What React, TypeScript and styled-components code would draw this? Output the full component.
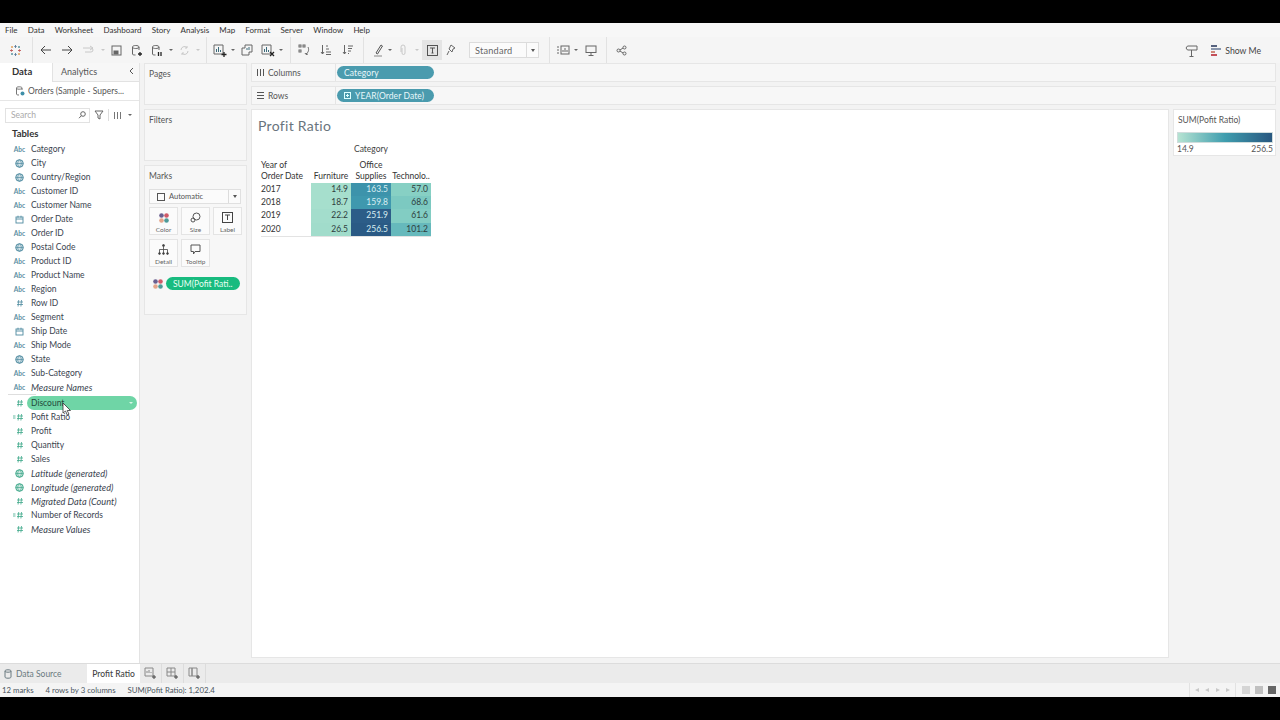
import React from "react";
import styled, { createGlobalStyle } from "styled-components";

const Global = createGlobalStyle`
  html, body { margin: 0; padding: 0; background: #000; }
  body { font-family: Lato, "Open Sans", sans-serif; overflow: hidden; }
  * { box-sizing: border-box; }
`;

const Page = styled.div`
  position: relative; width: 1280px; height: 720px; background: #000;
  display: flex; flex-direction: column; overflow: hidden; color: #3c3c3c;
`;
const BlackBar = styled.div<{ $h: number }>` height: ${p => p.$h}px; flex: none; background: #000; `;
const MenuBar = styled.nav`
  height: 14px; flex: none; background: #f7f7f7; display: flex; align-items: center;
  padding-left: 5px; gap: 10.2px; font-size: 8px; color: #333;
`;
const MenuItem = styled.span``;
const Toolbar = styled.div`
  height: 26px; flex: none; background: #f5f5f5; display: flex; align-items: center;
`;
const Slot = styled.div<{ $w: number; $on?: boolean }>`
  width: ${p => p.$w}px; height: 20px; flex: none; display: flex; align-items: center; justify-content: center;
  background: ${p => (p.$on ? "#e4e4e4" : "transparent")};
  & > svg { flex: none; }
`;
const Sep = styled.div<{ $w: number }>`
  width: ${p => p.$w}px; height: 26px; flex: none; display: flex; justify-content: center;
  &::after { content: ""; width: 1px; height: 100%; background: #e2e2e2; }
`;
const Caret = styled.span<{ $w?: number; $c?: string }>`
  flex: none; width: ${p => p.$w ?? 4}px; display: flex; justify-content: center;
  &::after { content: ""; flex: none; border-left: 2px solid transparent; border-right: 2px solid transparent;
    border-top: 2.5px solid ${p => p.$c ?? "#666"}; }
`;
const StandardBox = styled.div`
  width: 70px; height: 16px; margin-left: 9px; flex: none; background: #fbfbfb; border: 1px solid #dcdcdc;
  display: flex; align-items: center; font-size: 9.2px; letter-spacing: .2px; color: #666; padding-left: 5px; position: relative;
`;
const StandardText = styled.span` flex: 1; `;
const StandardCaret = styled.span`
  width: 12px; height: 100%; border-left: 1px solid #dcdcdc; display: flex; align-items: center; justify-content: center;
  &::after { content: ""; border-left: 2.5px solid transparent; border-right: 2.5px solid transparent; border-top: 3px solid #555; }
`;
const ToolRight = styled.div` margin-left: auto; display: flex; align-items: center; padding-right: 19px; `;
const ShowMe = styled.div` display: flex; align-items: center; gap: 4px; margin-left: 13px; font-size: 8.7px; color: #444; `;

const Body = styled.div` flex: 1; min-height: 0; background: #f3f3f3; display: flex; `;
const Side = styled.aside`
  width: 140px; flex: none; background: #fff; border-right: 1px solid #e3e3e3; display: flex; flex-direction: column;
`;
const SideTabs = styled.div` height: 19px; flex: none; display: flex; font-size: 9px; `;
const DataTab = styled.div`
  width: 52px; padding: 3px 0 0 12px; font-weight: 700; color: #333; font-size: 9.5px;
`;
const AnalyticsTab = styled.div`
  flex: 1; display: flex; justify-content: space-between; padding: 3px 3px 0 8px; background: #f7f7f7;
  border-left: 1px solid #e2e2e2; border-bottom: 1px solid #e2e2e2; color: #555;
`;
const SourceRow = styled.div`
  height: 19px; flex: none; display: flex; align-items: center; padding-left: 15px; gap: 3px; font-size: 8.5px; color: #555;
  border-bottom: 1px solid #e6e6e6;
`;
const SearchRow = styled.div` flex: none; display: flex; align-items: center; padding: 5px 0 0 5px; height: 23px; `;
const SearchBox = styled.div`
  width: 85px; height: 15px; border: 1px solid #e2e2e2; display: flex; align-items: center; justify-content: space-between;
  padding: 0 3px 0 5px; font-size: 8.5px; color: #aaa;
`;
const SearchTools = styled.div` display: flex; align-items: center; margin-left: 4px; gap: 4px; `;
const VLine = styled.div` width: 1px; height: 12px; background: #ddd; `;
const TablesHead = styled.div` flex: none; height: 18px; padding: 4px 0 0 12px; font-weight: 700; font-size: 9.5px; color: #333; `;
const FieldList = styled.div` display: flex; flex-direction: column; `;
const FieldRow = styled.div`
  height: 14px; display: flex; align-items: center; position: relative; flex: none;
`;
const IconCol = styled.div` width: 31px; flex: none; display: flex; justify-content: center; padding-left: 8px; `;
const FieldName = styled.span<{ $it?: boolean }>`
  font-size: ${p => (p.$it ? "9.2px" : "8.5px")}; color: #3b4450; font-style: ${p => (p.$it ? "italic" : "normal")}; white-space: nowrap;
`;
const AbcGlyph = styled.span`
  font-size: 6.5px; font-weight: 700; color: #5a8ea2; font-family: Lato, sans-serif; width: 14px; text-align: center; white-space: nowrap;
`;
const Divider = styled.div` height: 1px; width: 28px; margin: 0 0 1px 8px; background: #dedede; flex: none; `;
const DragPill = styled.div`
  position: absolute; left: 27px; top: 0; width: 110px; height: 14px; background: #6fd5a6; border-radius: 7px;
  display: flex; align-items: center; justify-content: space-between; padding: 0 4px 0 4px;
  font-size: 8.5px; color: #1f4a3a;
`;
const Cursor = styled.svg` position: absolute; left: 62px; top: 402px; `;

const CardCol = styled.div` width: 103px; flex: none; margin: 0 4px; display: flex; flex-direction: column; gap: 4px; `;
const Card = styled.section<{ $h: number }>`
  height: ${p => p.$h}px; flex: none; border: 1px solid #e6e6e6; background: #f7f7f7;
  padding: 5px 4px; font-size: 8.5px; color: #555; position: relative;
`;
const MarkSelect = styled.div`
  margin-top: 8px; height: 15px; width: 92px; background: #fbfbfb; border: 1px solid #e0e0e0; display: flex; align-items: center;
  font-size: 7.5px; padding-left: 7px; gap: 4px; color: #555;
`;
const CheckBox = styled.span` width: 8px; height: 8px; border: 1px solid #555; flex: none; `;
const SelectLabel = styled.span` flex: 1; `;
const MarkGrid = styled.div` display: grid; grid-template-columns: repeat(3, 29px); gap: 4px 3px; margin-top: 3px; `;
const MarkBtn = styled.div`
  height: 28px; background: #fbfbfb; border: 1px solid #e4e4e4; display: flex; flex-direction: column; align-items: center;
  justify-content: flex-end; gap: 3px; padding-bottom: 1px; font-size: 6.5px; color: #666;
`;
const MarkShelf = styled.div` display: flex; align-items: center; margin-top: 10px; gap: 3px; padding-left: 4px; `;
const MeasurePill = styled.div`
  width: 74px; height: 13px; background: #18bb7f; color: #eafff4; border-radius: 7px; font-size: 8.5px;
  display: flex; align-items: center; padding-left: 7px; white-space: nowrap;
`;

const MainCol = styled.div` flex: 1; min-width: 0; padding: 0 4px 5px 0; display: flex; flex-direction: column; `;
const Shelf = styled.div`
  height: 19px; flex: none; margin-bottom: 4px; border: 1px solid #e6e6e6; background: #f7f7f7; display: flex; align-items: center;
  font-size: 8.5px; color: #555;
`;
const ShelfLabel = styled.div`
  width: 84px; height: 100%; border-right: 1px solid #e4e4e4; display: flex; align-items: center; gap: 3px; padding-left: 4px;
`;
const DimPill = styled.div`
  margin-left: 1px; width: 97px; height: 13px; background: #4a9bae; border-radius: 7px; font-size: 8.5px;
  color: #e8f7fa; display: flex; align-items: center; padding-left: 7px; gap: 4px; letter-spacing: .1px;
`;
const Workspace = styled.div` flex: 1; display: flex; gap: 4px; min-height: 0; `;
const Canvas = styled.div`
  width: 918px; flex: none; background: #fff; border: 1px solid #e6e6e6; padding: 8px 0 0 6px;
`;
const Title = styled.h1` margin: 0; font-size: 14px; font-weight: 400; color: #69747d; letter-spacing: .3px; height: 25.5px; line-height: 15px; `;
const Table = styled.div`
  display: grid; grid-template-columns: 50px 40px 40px 40px; grid-template-rows: 13.4px 13px 12.8px repeat(4, 13.4px);
  margin: 0 0 0 3px; font-size: 8.5px; color: #333; width: 170px; border-bottom: 1px solid #e3e3e3;
`;
const HeadTitle = styled.div` grid-column: 2 / 5; grid-row: 1; text-align: center; color: #444; `;
const HeadYear = styled.div` grid-column: 1; grid-row: 2 / 4; align-self: end; line-height: 11px; padding-bottom: 1px; `;
const HeadCol = styled.div<{ $c: number }>`
  grid-column: ${p => p.$c}; grid-row: 2 / 4; align-self: end; text-align: center; line-height: 11px; padding-bottom: 1px; white-space: nowrap; overflow: hidden;
`;
const RowHead = styled.div<{ $r: number }>` grid-column: 1; grid-row: ${p => p.$r}; line-height: 13.4px; `;
const Cell = styled.div<{ $bg: string; $light?: boolean; $r: number; $c: number }>`
  grid-column: ${p => p.$c}; grid-row: ${p => p.$r};
  background: ${p => p.$bg}; color: ${p => (p.$light ? "#d7eef2" : "#2f3d3d")}; text-align: right; padding-right: 3px; line-height: 13.4px;
`;
const Legend = styled.aside`
  flex: 1; height: 47px; background: #fff; border: 1px solid #e6e6e6; padding: 5px 2px 0 3px; font-size: 8.5px; color: #555;
`;
const LegendTitle = styled.div` height: 17px; padding-left: 1px; `;
const Ramp = styled.div` height: 11px; background: linear-gradient(90deg, #b5e3d2, #3f9dae 50%, #285780); border: 1px solid #cfdcdc; `;
const LegendScale = styled.div` display: flex; justify-content: space-between; margin-top: 1px; `;

const TabBar = styled.div` height: 20px; flex: none; background: #ebebeb; border-top: 1px solid #dcdcdc; display: flex; align-items: stretch; `;
const SourceTab = styled.div`
  width: 87px; display: flex; align-items: center; padding-left: 4px; gap: 4px; font-size: 8.5px; color: #6a7a80;
`;
const SheetTab = styled.div` width: 53px; background: #fff; display: flex; align-items: center; justify-content: center; font-size: 8.5px; font-weight: 500; color: #444; `;
const AddTab = styled.div` width: 22px; border-right: 1px solid #dcdcdc; display: flex; align-items: center; justify-content: center; `;
const StatusBar = styled.footer`
  height: 14px; flex: none; background: #f4f4f4; display: flex; align-items: center; padding-left: 2px; font-size: 7.8px; color: #4a5560;
`;
const StatusText = styled.span<{ $ml?: number }>` margin-left: ${p => p.$ml ?? 0}px; `;
const Pager = styled.div` margin-left: auto; display: flex; align-items: center; height: 100%; `;
const PagerNav = styled.div` width: 47px; height: 100%; border-left: 1px solid #e2e2e2; border-right: 1px solid #e2e2e2; display: flex; align-items: center; justify-content: space-around; padding: 0 2px; `;
const PagerTri = styled.span<{ $left?: boolean }>`
  width: 0; height: 0; border-top: 2.5px solid transparent; border-bottom: 2.5px solid transparent;
  ${p => (p.$left ? "border-right: 4px solid #c9c9c9;" : "border-left: 4px solid #c9c9c9;")}
`;
const ViewIcons = styled.div` display: flex; align-items: center; gap: 5px; padding: 0 4px 0 6px; `;
const ViewBox = styled.span<{ $c: string }>` width: 8px; height: 8px; background: ${p => p.$c}; flex: none; `;

const Ico = ({ w = 14, h = 14, children, c = "#555", sw = 1 }: { w?: number; h?: number; children: React.ReactNode; c?: string; sw?: number }) => (
  <svg width={w} height={h} viewBox={`0 0 ${w} ${h}`} fill="none" stroke={c} strokeWidth={sw}>{children}</svg>
);

const Logo = () => (
  <svg width="13" height="13" viewBox="0 0 13 13" fill="none" strokeWidth=".9">
    <path d="M6.500 1v3M5.300 2.500h2.400M6.500 9v3M5.300 10.500h2.400" stroke="#5a7a9a" />
    <path d="M1 6.500h3M2.500 5.300v2.400M9 6.500h3M10.500 5.300v2.400" stroke="#c05a5a" />
    <path d="M3 2v2M2 3h2M10 9v2M9 10h2" stroke="#e09a50" />
    <path d="M10 2v2M9 3h2M3 9v2M2 10h2" stroke="#4f8f9a" />
  </svg>
);
const ArrowL = ({ c = "#444" }: { c?: string }) => <Ico w={12} h={10} c={c}><path d="M11 5H1M5 1L1 5l4 4" /></Ico>;
const ArrowR = ({ c = "#444" }: { c?: string }) => <Ico w={12} h={10} c={c}><path d="M1 5h10M7 1l4 4-4 4" /></Ico>;
const Redo = () => <Ico w={12} h={10} c="#c8c8c8"><path d="M1 3h8a2 2 0 010 4H3M8 1l3 2-3 2" /></Ico>;
const Save = () => <Ico w={11} h={11} c="#666"><rect x="1" y="1" width="9" height="9" /><rect x="3" y="6" width="4" height="3" fill="#666" /></Ico>;
const Db = ({ badge }: { badge: "plus" | "pause" }) => (
  <Ico w={12} h={13} c="#666">
    <path d="M1.500 3v7c0 .8 1 1 3 1M8 3v3M1.500 3c0-1 1.500-1.500 3.200-1.500S8 2 8 3 6.400 4.500 4.700 4.500 1.500 4 1.500 3z" />
    {badge === "plus" ? <path d="M9 8v4M7 10h4" stroke="#222" strokeWidth="1.300" /> : <path d="M7.500 8v4M10 8v4" stroke="#222" strokeWidth="1.300" />}
  </Ico>
);
const Refresh = () => <Ico w={11} h={11} c="#c8c8c8"><path d="M2 5a3.500 3.500 0 016-2.400M9 6a3.500 3.500 0 01-6 2.400" /><path d="M8 1v2H6M3 10V8h2" /></Ico>;
const BarAdd = ({ x }: { x?: boolean }) => (
  <Ico w={14} h={13} c="#666">
    <path d="M1 1h9v9H1z" /><path d="M3.500 8V5M5.500 8V3M7.500 8V6" stroke="#3a6a7a" />
    {x ? <path d="M9 8l4 4M13 8l-4 4" stroke="#222" strokeWidth="1.300" /> : <path d="M11 8v5M8.500 10.500h5" stroke="#222" strokeWidth="1.300" />}
  </Ico>
);
const Dup = () => <Ico w={12} h={12} c="#666"><path d="M4 1h7v7H8v3H1V4h3z" /><path d="M6 6V4M8 6V3" stroke="#3a6a7a" /></Ico>;
const Swap = () => <Ico w={12} h={12} c="#666"><rect x="1" y="1" width="2" height="2" /><rect x="5" y="1" width="2" height="2" /><rect x="1" y="6" width="2" height="2" /><path d="M10 3c1 2 1 5-2 7M7 9l1 1.500L10 10" /></Ico>;
const SortAsc = () => <Ico w={12} h={12} c="#666"><path d="M2.500 1v9M1 8l1.500 2L4 8" /><path d="M6 2h2M6 5h3M6 8h5M6 10.500h5" /></Ico>;
const SortDesc = () => <Ico w={12} h={12} c="#666"><path d="M2.500 1v9M1 8l1.500 2L4 8" /><path d="M6 2h5M6 4.500h4M6 7h3M6 9.500h1" /></Ico>;
const Pen = () => <Ico w={10} h={13} c="#555"><path d="M2 9L7 1l1.500 1L3.500 10z" /><path d="M0 12h8" stroke="#888" /></Ico>;
const Clip = () => <Ico w={10} h={12} c="#c8c8c8"><path d="M3 8V3a2 2 0 014 0v6a1.500 1.500 0 01-3 0V4" /></Ico>;
const TBox = () => <Ico w={11} h={11} c="#444" sw={.9}><rect x=".5" y=".5" width="10" height="10" /><path d="M3 3h5M5.500 3v5M4.500 8h2" /></Ico>;
const Pin = () => <Ico w={10} h={12} c="#666"><path d="M5 1l4 3-2 1-1 3-3-3 1-2zM3 7l-2 4" /></Ico>;
const Fit = () => <Ico w={14} h={10} c="#666"><rect x="5" y="1" width="8" height="8" /><path d="M7 7V5M9 7V3M11 7V5" /><path d="M1 2h2M1 5h2M1 8h2" /></Ico>;
const Monitor = () => <Ico w={12} h={11} c="#666"><rect x="1" y="1" width="10" height="6.500" /><path d="M6 7.500V10M3.500 10.500h5" /></Ico>;
const Share = () => <Ico w={11} h={11} c="#666"><circle cx="2.500" cy="5.500" r="1.500" /><circle cx="8.500" cy="2.500" r="1.500" /><circle cx="8.500" cy="8.500" r="1.500" /><path d="M4 5l3-2M4 6l3 2" /></Ico>;
const Signpost = () => <Ico w={13} h={13} c="#666"><path d="M1 4l1.500-2H12v4H2.500z" /><path d="M6.500 6v6M4.500 12.500h4" /></Ico>;
const ShowMeIcon = () => (
  <svg width="10" height="11" viewBox="0 0 10 11"><rect y="0" width="6" height="2" fill="#56627e" /><rect y="3" width="10" height="2" fill="#8a97ad" /><rect y="6" width="4" height="2" fill="#d08a7a" /><rect y="9" width="6" height="2" fill="#c4505a" /></svg>
);

const Globe = ({ c = "#4f8ba0" }: { c?: string }) => (
  <Ico w={9} h={9} c={c}><circle cx="4.500" cy="4.500" r="3.800" fill={c} fillOpacity=".25" /><path d="M.8 4.500h7.400M4.500.7c-2.400 2.400-2.400 5.200 0 7.600M4.500.7c2.400 2.400 2.400 5.200 0 7.600" strokeWidth=".7" /></Ico>
);
const Cal = ({ c = "#4f8ba0" }: { c?: string }) => (
  <Ico w={9} h={9} c={c} sw={.9}><rect x="1" y="2" width="7" height="6" /><path d="M1 4h7M3 .7v2M6 .7v2" /></Ico>
);
const Hash = ({ c = "#4f9c8a", eq }: { c?: string; eq?: boolean }) => (
  <svg width="14" height="8" viewBox="0 0 14 8" fill="none" stroke={c} strokeWidth=".8">
    <path d="M4 3h6M4 5.500h6M5.700 1l-.6 6.500M8.500 1l-.6 6.500" />
    {eq ? <path d="M0 3h2.500M0 5h2.500" /> : null}
  </svg>
);

const tool = (w: number, node?: React.ReactNode, on?: boolean) => <Slot $w={w} $on={on}>{node}</Slot>;

const MENUS = ["File", "Data", "Worksheet", "Dashboard", "Story", "Analysis", "Map", "Format", "Server", "Window", "Help"];

type F = { n: string; t: "abc" | "globe" | "cal" | "hash" | "hashEq" | "gGlobe"; it?: boolean };
const DIMS: F[] = [
  { n: "Category", t: "abc" }, { n: "City", t: "globe" }, { n: "Country/Region", t: "globe" }, { n: "Customer ID", t: "abc" },
  { n: "Customer Name", t: "abc" }, { n: "Order Date", t: "cal" }, { n: "Order ID", t: "abc" }, { n: "Postal Code", t: "globe" },
  { n: "Product ID", t: "abc" }, { n: "Product Name", t: "abc" }, { n: "Region", t: "abc" }, { n: "Row ID", t: "hash" },
  { n: "Segment", t: "abc" }, { n: "Ship Date", t: "cal" }, { n: "Ship Mode", t: "abc" }, { n: "State", t: "globe" },
  { n: "Sub-Category", t: "abc" }, { n: "Measure Names", t: "abc", it: true },
];
const MEAS: F[] = [
  { n: "Pofit Ratio", t: "hashEq" }, { n: "Profit", t: "hash" }, { n: "Quantity", t: "hash" }, { n: "Sales", t: "hash" },
  { n: "Latitude (generated)", t: "gGlobe", it: true }, { n: "Longitude (generated)", t: "gGlobe", it: true },
  { n: "Migrated Data (Count)", t: "hash", it: true }, { n: "Number of Records", t: "hashEq" }, { n: "Measure Values", t: "hash", it: true },
];
const fieldIcon = (t: F["t"], dim: boolean) => {
  const green = "#3fa88a";
  if (t === "abc") return <AbcGlyph>Abc</AbcGlyph>;
  if (t === "globe") return <Globe />;
  if (t === "gGlobe") return <Globe c={green} />;
  if (t === "cal") return <Cal />;
  if (t === "hashEq") return <Hash c={green} eq />;
  return <Hash c={dim ? "#4f8ba0" : green} />;
};
const Field = ({ f, dim }: { f: F; dim: boolean }) => (
  <FieldRow><IconCol>{fieldIcon(f.t, dim)}</IconCol><FieldName $it={f.it}>{f.n}</FieldName></FieldRow>
);

const ROWS: [string, [string, string, boolean][]][] = [
  ["2017", [["14.9", "#a6dfcd", false], ["163.5", "#3d93ab", true], ["57.0", "#87d0c4", false]]],
  ["2018", [["18.7", "#a6dfcd", false], ["159.8", "#3f98ae", true], ["68.6", "#7cc9c1", false]]],
  ["2019", [["22.2", "#a3ddcc", false], ["251.9", "#2c5d88", true], ["61.6", "#82cdc3", false]]],
  ["2020", [["26.5", "#a1dccb", false], ["256.5", "#2a5a85", true], ["101.2", "#66b9bc", false]]],
];

const ColorDots = () => (
  <svg width="10" height="10" viewBox="0 0 10 10">
    <circle cx="2.500" cy="2.500" r="2.300" fill="#6a5f8f" /><circle cx="7.500" cy="2.500" r="2.300" fill="#cf5a68" />
    <circle cx="2.500" cy="7.500" r="2.300" fill="#e5a58a" /><circle cx="7.500" cy="7.500" r="2.300" fill="#4f9a98" />
  </svg>
);
const MarkIcon = ({ k }: { k: string }) => {
  if (k === "Color") return <ColorDots />;
  if (k === "Size") return <Ico w={11} h={11}><circle cx="6.500" cy="4.500" r="3.500" /><circle cx="3" cy="8" r="2" /></Ico>;
  if (k === "Label") return <Ico w={11} h={11} c="#444"><rect x=".5" y=".5" width="10" height="10" /><path d="M3 3h5M5.500 3v5" /></Ico>;
  if (k === "Detail") return <Ico w={11} h={11} c="#444" sw={.8}><circle cx="5.500" cy="1.500" r="1" fill="#444" /><path d="M5.500 2.500v3M1.500 9V5.500h8V9M5.500 5.500V9" /><circle cx="1.500" cy="9.500" r=".9" fill="#444" /><circle cx="5.500" cy="9.500" r=".9" fill="#444" /><circle cx="9.500" cy="9.500" r=".9" fill="#444" /></Ico>;
  return <Ico w={11} h={11}><path d="M1 1h9v6.500H5L3.500 10V7.500H1z" /></Ico>;
};

export default function App() {
  return (
    <Page>
      <Global />
      <BlackBar $h={23} />
      <MenuBar>{MENUS.map(m => <MenuItem key={m}>{m}</MenuItem>)}</MenuBar>
      <Toolbar>
        {tool(30, <Logo />)}<Sep $w={4} />
        {tool(24, <ArrowL />)}{tool(18, <ArrowR />)}{tool(24, <Redo />)}<Caret $c="#c8c8c8" $w={6} />
        {tool(20, <Save />)}{tool(22, <Db badge="plus" />)}{tool(18, <Db badge="pause" />)}{tool(10, <Caret />)}
        {tool(16, <Refresh />)}{tool(12, <Caret $c="#c8c8c8" />)}<Sep $w={4} />
        {tool(23, <BarAdd />)}<Caret />{tool(24, <Dup />)}{tool(18, <BarAdd x />)}{tool(8, <Caret />)}<Sep $w={10} />
        {tool(18, <Swap />)}{tool(26, <SortAsc />)}{tool(18, <SortDesc />)}<Sep $w={12} />
        {tool(20, <Pen />)}<Caret $w={2} />{tool(24, <Clip />)}<Caret $c="#c8c8c8" />{tool(3)}
        {tool(20, <TBox />, true)}{tool(18, <Pin />)}
        <StandardBox><StandardText>Standard</StandardText><StandardCaret /></StandardBox>
        <Sep $w={20} />
        {tool(8, <Fit />)}<Caret $w={18} />{tool(12, <Monitor />)}<Sep $w={18} />{tool(12, <Share />)}
        <ToolRight><Signpost /><ShowMe><ShowMeIcon /><span>Show Me</span></ShowMe></ToolRight>
      </Toolbar>
      <Body>
        <Side>
          <SideTabs>
            <DataTab>Data</DataTab>
            <AnalyticsTab><span>Analytics</span><Ico w={8} h={10} c="#555"><path d="M5 2L2 5l3 3" /></Ico></AnalyticsTab>
          </SideTabs>
          <SourceRow>
            <Ico w={10} h={10} c="#777"><path d="M1.500 2v6c0 .8 1 1 2.500 1M7 2v2M1.500 2c0-.8 1-1.200 2.700-1.200S7 1.200 7 2 5.900 3.200 4.200 3.200 1.500 2.800 1.500 2z" /><circle cx="7.500" cy="7.500" r="2" fill="#3f8fa8" stroke="none" /></Ico>
            <span>Orders (Sample - Supers...</span>
          </SourceRow>
          <SearchRow>
            <SearchBox>Search<Ico w={8} h={8} c="#666"><circle cx="5" cy="3" r="2.300" /><path d="M3.400 4.700L1 7.200" /></Ico></SearchBox>
            <SearchTools>
              <Ico w={10} h={10} c="#666"><path d="M1 1h8L6 5v4L4 8V5z" /></Ico>
              <VLine />
              <Ico w={9} h={9} c="#777"><path d="M1.500 1v7M4.500 1v7M7.500 1v7" /></Ico>
              <Caret $w={8} />
            </SearchTools>
          </SearchRow>
          <TablesHead>Tables</TablesHead>
          <FieldList>
            {DIMS.map(f => <Field key={f.n} f={f} dim />)}
            <Divider />
            <FieldRow>
              <IconCol><Hash c="#3fa88a" /></IconCol>
              <FieldName>Discount</FieldName>
              <DragPill><span>Discount</span><Caret $c="#d8f5e6" /></DragPill>
            </FieldRow>
            {MEAS.map(f => <Field key={f.n} f={f} dim={false} />)}
          </FieldList>
        </Side>
        <CardCol>
          <Card $h={42}>Pages</Card>
          <Card $h={52}>Filters</Card>
          <Card $h={150}>
            Marks
            <MarkSelect><CheckBox /><SelectLabel>Automatic</SelectLabel><StandardCaret /></MarkSelect>
            <MarkGrid>
              {["Color", "Size", "Label", "Detail", "Tooltip"].map(k => <MarkBtn key={k}><MarkIcon k={k} />{k}</MarkBtn>)}
            </MarkGrid>
            <MarkShelf><ColorDots /><MeasurePill>SUM(Pofit Rati..</MeasurePill></MarkShelf>
          </Card>
        </CardCol>
        <MainCol>
          <Shelf>
            <ShelfLabel><Ico w={9} h={9} c="#555"><path d="M1.500 1v7M4.500 1v7M7.500 1v7" /></Ico>Columns</ShelfLabel>
            <DimPill>Category</DimPill>
          </Shelf>
          <Shelf>
            <ShelfLabel><Ico w={9} h={9} c="#555"><path d="M1 1.500h7M1 4.500h7M1 7.500h7" /></Ico>Rows</ShelfLabel>
            <DimPill><Ico w={7} h={7} c="#dff"><rect x=".5" y=".5" width="6" height="6" /><path d="M2 3.500h3M3.500 2v3" /></Ico>YEAR(Order Date)</DimPill>
          </Shelf>
          <Workspace>
            <Canvas>
              <Title>Profit Ratio</Title>
              <Table>
                <HeadTitle>Category</HeadTitle>
                <HeadYear>Year of<br />Order Date</HeadYear>
                <HeadCol $c={2}>Furniture</HeadCol>
                <HeadCol $c={3}>Office<br />Supplies</HeadCol>
                <HeadCol $c={4}>Technolo..</HeadCol>
                {ROWS.map(([y, cells], i) => (
                  <React.Fragment key={y}>
                    <RowHead $r={i + 4}>{y}</RowHead>
                    {cells.map(([v, bg, light], j) => <Cell key={v} $r={i + 4} $c={j + 2} $bg={bg} $light={light}>{v}</Cell>)}
                  </React.Fragment>
                ))}
              </Table>
            </Canvas>
            <Legend>
              <LegendTitle>SUM(Pofit Ratio)</LegendTitle>
              <Ramp />
              <LegendScale><span>14.9</span><span>256.5</span></LegendScale>
            </Legend>
          </Workspace>
        </MainCol>
      </Body>
      <TabBar>
        <SourceTab><Ico w={8} h={10} c="#6a7a80"><path d="M1 2v6c0 .8 1.200 1.200 3 1.200S7 8.800 7 8V2M1 2c0-.8 1.200-1.200 3-1.200S7 1.200 7 2 5.800 3.200 4 3.200 1 2.800 1 2z" /></Ico>Data Source</SourceTab>
        <SheetTab>Profit Ratio</SheetTab>
        <AddTab><Ico w={13} h={13} c="#888"><path d="M1 1h8v8H1z" /><path d="M3 6V4M5 6V3M7 6V5" /><path d="M10 8v4M8 10h4" stroke="#444" /></Ico></AddTab>
        <AddTab><Ico w={13} h={13} c="#888"><path d="M1 1h8v8H1zM1 5h8M5 1v8" /><path d="M10 8v4M8 10h4" stroke="#444" /></Ico></AddTab>
        <AddTab><Ico w={13} h={13} c="#888"><path d="M1 1h3v8H1zM4 1h5v8H4z" /><path d="M10 8v4M8 10h4" stroke="#444" /></Ico></AddTab>
      </TabBar>
      <StatusBar>
        <StatusText>12 marks</StatusText>
        <StatusText $ml={12}>4 rows by 3 columns</StatusText>
        <StatusText $ml={12}>SUM(Pofit Ratio): 1,202.4</StatusText>
        <Pager>
          <PagerNav><PagerTri $left /><PagerTri $left /><PagerTri /><PagerTri /></PagerNav>
          <ViewIcons><ViewBox $c="#d5d5d5" /><ViewBox $c="#c0c0c0" /><ViewBox $c="#666" /></ViewIcons>
        </Pager>
      </StatusBar>
      <BlackBar $h={23} />
      <Cursor width="10" height="14" viewBox="0 0 10 14"><path d="M1 1v10l2.500-2 1.800 4 1.700-.8-1.800-3.700H8.500z" fill="#fff" stroke="#333" strokeWidth=".8" /></Cursor>
    </Page>
  );
}
